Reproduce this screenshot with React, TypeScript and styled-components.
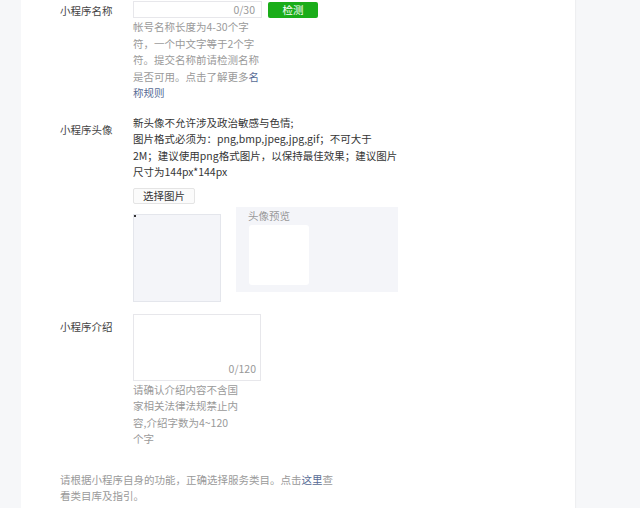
import React from "react"
import styled, { createGlobalStyle } from "styled-components"

const Global = createGlobalStyle`
  html, body {
    margin: 0;
    padding: 0;
    background: #f6f7f9;
  }
  body {
    font-family: "Noto Sans CJK SC", "Noto Sans", sans-serif;
    font-size: 10.5px;
    color: #353535;
  }
`

const Page = styled.div`
  display: flex;
  min-height: 508px;
`

const Panel = styled.div`
  margin-left: 21px;
  width: 554px;
  background: #fff;
  padding: 1px 0 0 39px;
  box-sizing: border-box;
  box-shadow: 1px 0 1px rgba(0, 0, 0, 0.03);
`

const Row = styled.div<{ gap?: number }>`
  display: flex;
  align-items: flex-start;
  margin-bottom: ${(p) => p.gap ?? 12}px;
`

const Label = styled.div<{ offset: number }>`
  width: 73px;
  flex-shrink: 0;
  padding-top: ${(p) => p.offset}px;
  line-height: 16.5px;
  color: #444;
`

const Content = styled.div`
  display: flex;
  flex-direction: column;
  align-items: flex-start;
`

const InputLine = styled.div`
  display: flex;
  align-items: center;
  gap: 6px;
`

const Input = styled.div`
  width: 129px;
  height: 17px;
  box-sizing: border-box;
  border: 1px solid #e7e7eb;
  display: flex;
  align-items: center;
  justify-content: flex-end;
  padding-right: 6px;
  color: #999;
`

const GreenButton = styled.div`
  width: 50px;
  height: 16px;
  background: #1aad19;
  border-radius: 2px;
  color: #fff;
  display: flex;
  align-items: center;
  justify-content: center;
  font-size: 10.5px;
`

const Help = styled.div<{ width: number }>`
  width: ${(p) => p.width}px;
  line-height: 16.5px;
  color: #9a9a9a;
  margin-top: 1px;
`

const Link = styled.a`
  color: #576b95;
  text-decoration: none;
`

const Notice = styled.div`
  line-height: 16.5px;
  color: #353535;
  white-space: nowrap;
`

const PlainButton = styled.div`
  margin-top: 7px;
  width: 62px;
  height: 16px;
  box-sizing: border-box;
  border: 1px solid #e4e4e4;
  border-radius: 2px;
  background: #fbfbfb;
  display: flex;
  align-items: center;
  justify-content: center;
  color: #353535;
`

const ImageRow = styled.div`
  display: flex;
  align-items: flex-start;
  gap: 15px;
  margin-top: 3px;
`

const Crop = styled.div`
  position: relative;
  margin-top: 7px;
  width: 88px;
  height: 88px;
  box-sizing: border-box;
  border: 1px solid #e4e6ec;
  background: #f4f5f9;
  &::before {
    content: "";
    position: absolute;
    left: 0;
    top: 0;
    width: 2px;
    height: 2px;
    background: #333;
  }
`

const Preview = styled.div`
  width: 162px;
  height: 85px;
  box-sizing: border-box;
  background: #f4f5f9;
  padding: 1px 12px 0;
`

const PreviewTitle = styled.div`
  line-height: 16px;
  color: #999;
`

const PreviewImage = styled.div`
  margin: 1px 0 0 1px;
  width: 60px;
  height: 60px;
  background: #fff;
  border-radius: 3px;
`

const TextArea = styled.div`
  width: 128px;
  height: 67px;
  box-sizing: border-box;
  border: 1px solid #e7e7eb;
  display: flex;
  align-items: flex-end;
  justify-content: flex-end;
  padding: 0 4px 3px 0;
  color: #999;
  line-height: 16px;
`

const Footer = styled.div`
  width: 275px;
  line-height: 16.5px;
  color: #9a9a9a;
`

export default function App() {
  return (
    <Page>
      <Global />
      <Panel>
        <Row gap={13}>
          <Label offset={2}>小程序名称</Label>
          <Content>
            <InputLine>
              <Input>0/30</Input>
              <GreenButton>检测</GreenButton>
            </InputLine>
            <Help width={128}>
              帐号名称长度为4-30个字符，一个中文字等于2个字符。提交名称前请检测名称是否可用。点击了解更多
              <Link>名称规则</Link>
            </Help>
          </Content>
        </Row>
        <Row gap={12}>
          <Label offset={7}>小程序头像</Label>
          <Content>
            <Notice>
              新头像不允许涉及政治敏感与色情;
              <br />
              图片格式必须为：png,bmp,jpeg,jpg,gif；不可大于
              <br />
              2M；建议使用png格式图片，以保持最佳效果；建议图片
              <br />
              尺寸为144px*144px
            </Notice>
            <PlainButton>选择图片</PlainButton>
            <ImageRow>
              <Crop />
              <Preview>
                <PreviewTitle>头像预览</PreviewTitle>
                <PreviewImage />
              </Preview>
            </ImageRow>
          </Content>
        </Row>
        <Row gap={24}>
          <Label offset={5}>小程序介绍</Label>
          <Content>
            <TextArea>0/120</TextArea>
            <Help width={106}>
              请确认介绍内容不含国家相关法律法规禁止内容,介绍字数为4~120
              <br />
              个字
            </Help>
          </Content>
        </Row>
        <Footer>
          请根据小程序自身的功能，正确选择服务类目。点击<Link>这里</Link>
          查看类目库及指引。
        </Footer>
      </Panel>
    </Page>
  )
}
